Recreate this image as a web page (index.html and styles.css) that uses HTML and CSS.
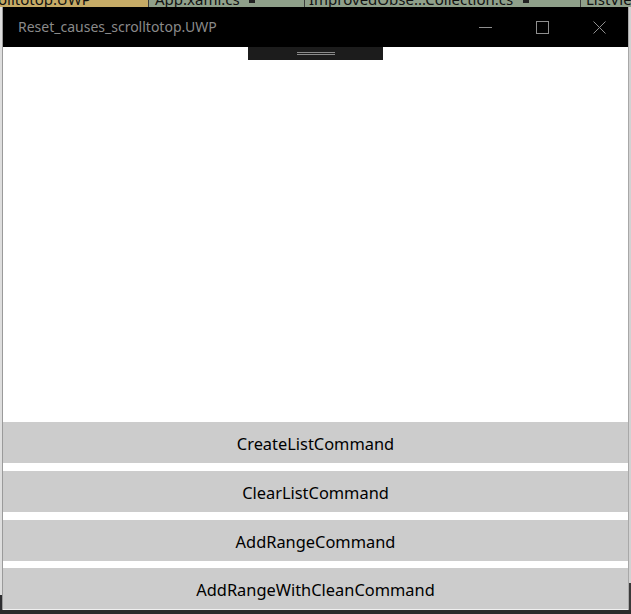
FILE: index.html
```html
<!DOCTYPE html>
<html>
<head>
<meta charset="utf-8">
<link rel="stylesheet" href="styles.css">
</head>
<body>
<div class="screen">
  <div class="tabs">
    <div class="tab tab-active"><span class="tab-text">olltotop.UWP</span></div>
    <div class="tab tab-2"><span class="tab-text">App.xaml.cs</span><span class="lock"></span></div>
    <div class="tab tab-3"><span class="tab-text">ImprovedObse...Collection.cs</span><span class="lock"></span></div>
    <div class="tab tab-4"><span class="tab-text">ListVie</span></div>
  </div>
  <div class="middle">
    <div class="gutter gutter-left"></div>
    <div class="window">
      <div class="titlebar">
        <div class="title">Reset_causes_scrolltotop.UWP</div>
        <div class="caption">
          <div class="cap-btn">
            <svg width="13" height="13" viewBox="0 0 13 13"><path d="M0 6.5H13" stroke="#8f8f8f" stroke-width="1" fill="none"/></svg>
          </div>
          <div class="cap-btn">
            <svg width="13" height="13" viewBox="0 0 13 13"><rect x="0.5" y="0.5" width="12" height="12" stroke="#8f8f8f" stroke-width="1" fill="none"/></svg>
          </div>
          <div class="cap-btn">
            <svg width="13" height="13" viewBox="0 0 13 13"><path d="M0.5 0.5L12.5 12.5M12.5 0.5L0.5 12.5" stroke="#8f8f8f" stroke-width="1" fill="none"/></svg>
          </div>
        </div>
      </div>
      <div class="content">
        <div class="handle"><span class="handle-line"></span><span class="handle-line"></span></div>
        <div class="buttons">
          <div class="btn">CreateListCommand</div>
          <div class="btn">ClearListCommand</div>
          <div class="btn">AddRangeCommand</div>
          <div class="btn btn-last">AddRangeWithCleanCommand</div>
        </div>
      </div>
    </div>
    <div class="gutter gutter-right"></div>
  </div>
  <div class="bottom"></div>
</div>
</body>
</html>
```

FILE: styles.css
```css
html, body {
  margin: 0;
  padding: 0;
}
body {
  background: #2d2d30;
  font-family: "Noto Sans", "Open Sans", "DejaVu Sans", sans-serif;
}
.screen {
  width: 631px;
  height: 614px;
  display: flex;
  flex-direction: column;
  overflow: hidden;
}
.tabs {
  height: 7px;
  display: flex;
  overflow: hidden;
  background: #8fa08a;
  flex: none;
}
.tab {
  height: 7px;
  overflow: hidden;
  display: flex;
  align-items: flex-end;
  box-sizing: border-box;
  border-right: 1px solid #3d3d3d;
  font-size: 15px;
  color: #111;
  white-space: nowrap;
}
.tab-text {
  display: block;
  line-height: 18px;
  margin-bottom: -1px;
}
.tab-active {
  width: 151px;
  background: #c6ab66;
  padding-left: 0;
  margin-left: -2px;
}
.tab-2 {
  width: 156px;
  padding-left: 6px;
}
.tab-3 {
  width: 276px;
  padding-left: 4px;
}
.tab-4 {
  flex: 1;
  border-right: none;
  padding-left: 5px;
}
.lock {
  width: 6px;
  height: 4px;
  background: #222;
  margin-left: 9px;
  margin-bottom: 4px;
  align-self: flex-end;
  flex: none;
}
.tab-3 .lock {
  margin-left: 10px;
}
.middle {
  display: flex;
  height: 603px;
  flex: none;
}
.gutter {
  width: 3px;
  flex: none;
}
.gutter-left {
  background: linear-gradient(to bottom, #dedede 0, #dedede 588px, #2d2d30 588px);
  border-right: 1px solid #9a9a9a;
  width: 2px;
}
.gutter-right {
  background: linear-gradient(to bottom, #d2d2d2 0, #d2d2d2 576px, #3a3a3a 576px);
  border-left: 1px solid #a8a8a8;
  width: 2px;
}
.window {
  width: 625px;
  display: flex;
  flex-direction: column;
  background: #ffffff;
  border-bottom: 1px solid #f0f0f0;
}
.titlebar {
  height: 40px;
  background: #000000;
  display: flex;
  align-items: center;
  flex: none;
}
.title {
  flex: 1;
  padding-left: 15px;
  font-size: 14px;
  color: #8a8a8a;
  padding-bottom: 1px;
}
.caption {
  display: flex;
  height: 40px;
  align-self: stretch;
}
.cap-btn {
  width: 57px;
  display: flex;
  align-items: center;
  justify-content: center;
}
.cap-btn svg {
  display: block;
}
.content {
  flex: 1;
  position: relative;
  display: flex;
  flex-direction: column;
  justify-content: flex-end;
}
.handle {
  position: absolute;
  left: 245px;
  top: 0;
  width: 135px;
  height: 13px;
  background: #1c1c1c;
  display: flex;
  flex-direction: column;
  align-items: center;
  justify-content: center;
  gap: 1px;
}
.handle-line {
  display: block;
  width: 38px;
  height: 1px;
  background: #8a8a8a;
}
.buttons {
  display: flex;
  flex-direction: column;
  gap: 8px;
}
.btn {
  height: 41px;
  box-sizing: border-box;
  padding-top: 2px;
  background: #cccccc;
  color: #000000;
  font-size: 16.4px;
  display: flex;
  align-items: center;
  justify-content: center;
}
.btn-last {
  margin-top: -1px;
}
.bottom {
  flex: 1;
  background: #2b2b2b;
}
```
